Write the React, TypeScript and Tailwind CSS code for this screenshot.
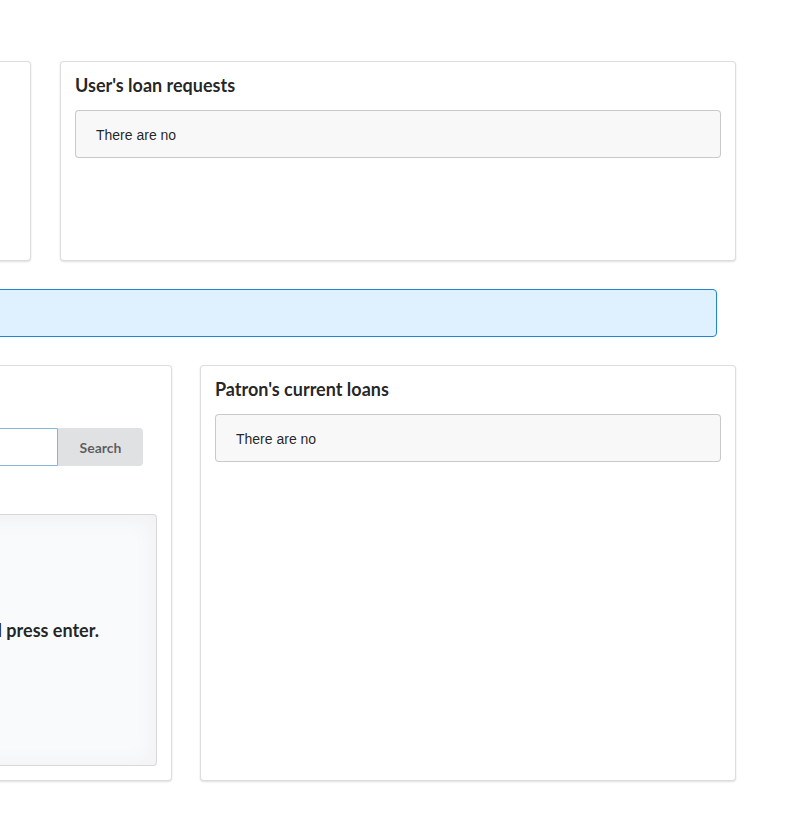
import React from 'react'

// Semantic-style segment card
function Card({ className, children }: { className: string; children?: React.ReactNode }) {
  return (
    <div
      className={`bg-white border border-[rgba(34,36,38,0.15)] rounded-[4px] shadow-[0_1px_2px_0_rgba(34,36,38,0.15)] p-[14px] ${className}`}
    >
      {children}
    </div>
  )
}

function CardTitle({ children }: { children: React.ReactNode }) {
  return (
    <h3 className="font-['Lato','Liberation_Sans',sans-serif] font-bold text-[18px] leading-[23px] text-[rgba(0,0,0,0.87)] -mt-[2px]">
      {children}
    </h3>
  )
}

function EmptyMessage() {
  return (
    <div className="mt-[13px] h-[48px] flex items-center pt-[2px] px-[21px] bg-[#f8f8f9] rounded-[4px] shadow-[inset_0_0_0_1px_rgba(34,36,38,0.22)] font-['Liberation_Sans',Arial,sans-serif] text-[14px] text-[rgba(0,0,0,0.87)]">
      There are no
    </div>
  )
}

export default function App() {
  return (
    <div className="min-h-screen w-[808px] overflow-hidden bg-white pt-[61px]">
      {/* top row */}
      <div className="flex gap-[29px] -ml-[200px]">
        <Card className="w-[231px] h-[200px] shrink-0" />
        <Card className="w-[676px] h-[200px] shrink-0">
          <CardTitle>User's loan requests</CardTitle>
          <EmptyMessage />
        </Card>
      </div>

      {/* info bar */}
      <div className="mt-[28px] -ml-[100px] w-[817px] h-[48px] bg-[#dff0ff] border border-[#2185d0] rounded-[4px]" />

      {/* bottom row */}
      <div className="mt-[28px] flex gap-[28px] -ml-[200px]">
        <Card className="w-[372px] h-[416px] shrink-0 flex flex-col">
          <div className="h-[23px] font-['Lato',sans-serif] font-bold text-[18px]" />
          <div className="mt-[25px] flex">
            <input
              className="flex-1 h-[38px] border border-[#85b7d9] rounded-l-[4px] px-[14px] outline-none font-['Lato',sans-serif] text-[14px]"
              readOnly
            />
            <button className="w-[85px] h-[38px] bg-[#e0e1e2] rounded-r-[4px] font-['Lato','Liberation_Sans',sans-serif] font-bold text-[14px] text-[rgba(0,0,0,0.6)]">
              Search
            </button>
            <div className="w-[14px]" />
          </div>
          <div className="mt-[48px] flex-1 flex items-center justify-end pr-[57px] pb-[20px] bg-[#f9fafb] border border-[rgba(34,36,38,0.15)] rounded-[4px] shadow-[inset_0_2px_25px_0_rgba(34,36,38,0.05)]">
            <span className="font-['Lato','Liberation_Sans',sans-serif] font-bold text-[18px] text-[rgba(0,0,0,0.87)] whitespace-nowrap">
              Search for a patron and press enter.
            </span>
          </div>
        </Card>
        <Card className="w-[536px] h-[416px] shrink-0">
          <CardTitle>Patron's current loans</CardTitle>
          <EmptyMessage />
        </Card>
      </div>
    </div>
  )
}
